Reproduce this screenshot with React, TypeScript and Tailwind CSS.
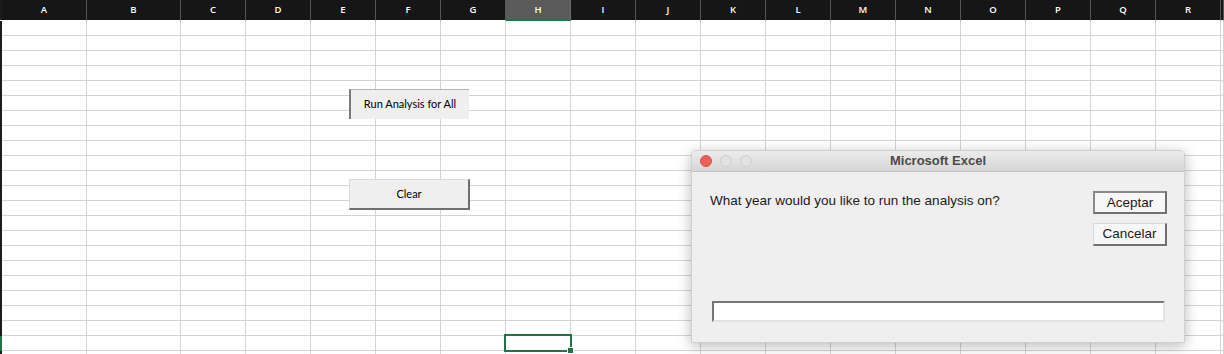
import React from 'react';

const COLS = ['A', 'B', 'C', 'D', 'E', 'F', 'G', 'H', 'I', 'J', 'K', 'L', 'M', 'N', 'O', 'P', 'Q', 'R', ''];
const ROW_COUNT = 23;
const SELECTED_ROW = 21;

const gridCols = 'grid grid-cols-[2px_85px_94px_repeat(16,65px)_1fr]';

const HeaderRow = () => (
  <div className={gridCols}>
    <div className="h-[21px] bg-[#1c1c1c] border-b border-white" />
    {COLS.map((c, i) => (
      <div
        key={i}
        className={
          c === 'H'
            ? 'h-[21px] bg-[#5a5a5a] border-r border-[#6a6a6a] border-b border-b-[#217346] flex items-center justify-center text-white text-[9.5px] font-semibold'
            : 'h-[21px] bg-[#161616] border-r border-[#555555] border-b border-b-white flex items-center justify-center text-white text-[9.5px] font-semibold'
        }
      >
        {c}
      </div>
    ))}
  </div>
);

const SheetRow = ({ index }: { index: number }) => {
  const selected = index === SELECTED_ROW;
  return (
    <div className={gridCols}>
      <div className={selected ? 'h-[15px] bg-[#217346]' : 'h-[15px] bg-[#1c1c1c]'} />
      {COLS.map((c, i) => (
        <div key={i} className="relative h-[15px] border-r border-b border-[#d4d4d4] bg-white">
          {selected && c === 'H' && (
            <>
              <div className="absolute z-10 -left-[2px] -top-[2px] w-[68px] h-[18px] border-2 border-[#217346]" />
              <div className="absolute z-10 left-[62px] top-[12px] w-[5px] h-[5px] bg-[#217346] outline outline-1 outline-white" />
            </>
          )}
        </div>
      ))}
    </div>
  );
};

const PromptDialog = () => (
  <div className="absolute z-20 left-[691px] top-[150px] w-[494px] h-[193px] rounded-t-[5px] bg-[#efefef] shadow-[0_3px_14px_rgba(0,0,0,0.28)] border border-[#cfcfcf] overflow-hidden flex flex-col">
    {/* title bar */}
    <div className="relative h-[21px] shrink-0 bg-gradient-to-b from-[#ececec] to-[#d6d6d6] border-b border-[#c2c2c2] flex items-center justify-center">
      <div className="absolute left-[8px] top-[4px] flex gap-[8px]">
        <span className="w-[12px] h-[12px] rounded-full bg-[#ee5f57] border border-[#d9524b]" />
        <span className="w-[12px] h-[12px] rounded-full bg-[#e2e2e2] border border-[#cdcdcd]" />
        <span className="w-[12px] h-[12px] rounded-full bg-[#e2e2e2] border border-[#cdcdcd]" />
      </div>
      <span className="text-[13px] font-bold text-[#4a4a4a] font-['Liberation_Sans',sans-serif]">Microsoft Excel</span>
    </div>

    <div className="relative flex-1 font-['Liberation_Sans',sans-serif] text-[#1a1a1a]">
      <p className="absolute left-[18px] top-[19px] text-[13.5px]">What year would you like to run the analysis on?</p>

      <div className="absolute left-[401px] top-[19px] flex flex-col gap-[9px]">
        <button className="w-[74px] h-[23px] bg-[#f7f7f7] border-2 border-[#707070] border-t-[#8a8a8a] border-l-[#8a8a8a] text-[13.5px] leading-none">
          Aceptar
        </button>
        <button className="w-[74px] h-[23px] bg-[#f7f7f7] border border-[#d8d8d8] border-r-2 border-b-2 border-r-[#707070] border-b-[#707070] text-[13.5px] leading-none">
          Cancelar
        </button>
      </div>

      <div className="absolute left-[20px] top-[129px] w-[453px] h-[21px] bg-white border-2 border-[#e2e2e2] border-t-[#767676] border-l-[#767676]" />
    </div>
  </div>
);

export default function App() {
  return (
    <div className="relative w-[1224px] h-[354px] overflow-hidden bg-white font-['Open_Sans',sans-serif]">
      <HeaderRow />
      {Array.from({ length: ROW_COUNT }).map((_, i) => (
        <SheetRow key={i} index={i} />
      ))}

      {/* sheet form buttons */}
      <button className="absolute z-10 left-[349px] top-[89px] w-[120px] h-[30px] bg-[#efefef] border-l-2 border-t border-l-[#7a7a7a] border-t-[#b5b5b5] text-[11px] text-black font-['Lato',sans-serif]">
        Run Analysis for All
      </button>
      <button className="absolute z-10 left-[349px] top-[179px] w-[121px] h-[31px] bg-[#efefef] border-r-2 border-b-2 border-t border-l border-r-[#6f6f6f] border-b-[#6f6f6f] border-t-[#dcdcdc] border-l-[#dcdcdc] text-[11px] text-black font-['Lato',sans-serif]">
        Clear
      </button>

      <PromptDialog />
    </div>
  );
}
